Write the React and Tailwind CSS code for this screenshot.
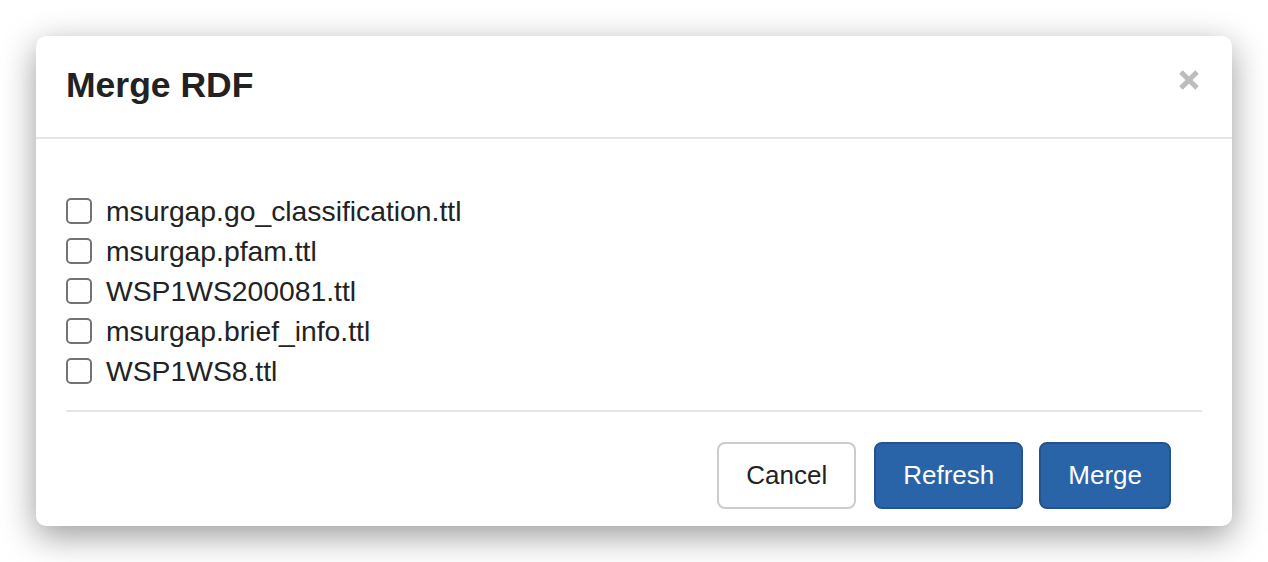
const files = [
  "msurgap.go_classification.ttl",
  "msurgap.pfam.ttl",
  "WSP1WS200081.ttl",
  "msurgap.brief_info.ttl",
  "WSP1WS8.ttl",
];

const App = () => {
  return (
    <div className="w-full h-[562px] bg-white pt-[36px] pl-[36px] font-['Liberation_Sans',Arial,sans-serif] text-[#333]">
      <div className="w-[1196px] h-[490px] bg-white rounded-[10px] shadow-[0_10px_34px_rgba(0,0,0,0.4)] flex flex-col">
        {/* Header */}
        <div className="h-[103px] border-b-2 border-[#e5e5e5] flex justify-between items-start pl-[30px] pr-[33px] pt-[30px]">
          <h4 className="text-[35.5px] leading-[1.1] font-bold text-[#222]">Merge RDF</h4>
          <svg width="20" height="20" viewBox="0 0 20 20" className="mt-[4px]">
            <path d="M2 2 L18 18 M18 2 L2 18" stroke="#bdbdbd" strokeWidth="5" />
          </svg>
        </div>

        {/* Body */}
        <div className="px-[30px] pt-[52px]">
          {files.map((f) => (
            <label key={f} className="flex items-center h-[40px] text-[28.3px] text-[#222] gap-[14px]">
              <span className="w-[26px] h-[26px] border-2 border-[#737373] rounded-[5px] bg-white shrink-0" />
              <span>{f}</span>
            </label>
          ))}
          <div className="mt-[19px] h-[2px] bg-[#e5e5e5]" />
        </div>

        {/* Footer */}
        <div className="flex justify-end pt-[30px] pr-[61px]">
          <button className="h-[67px] px-[27px] border-2 border-[#cccccc] rounded-[8px] bg-white text-[26px] text-[#222]">
            Cancel
          </button>
          <button className="ml-[18px] h-[67px] px-[27px] border-2 border-[#23538c] rounded-[8px] bg-[#2a64a8] text-[26px] text-white">
            Refresh
          </button>
          <button className="ml-[16px] h-[67px] px-[27px] border-2 border-[#23538c] rounded-[8px] bg-[#2a64a8] text-[26px] text-white">
            Merge
          </button>
        </div>
      </div>
    </div>
  );
};

export default App;
